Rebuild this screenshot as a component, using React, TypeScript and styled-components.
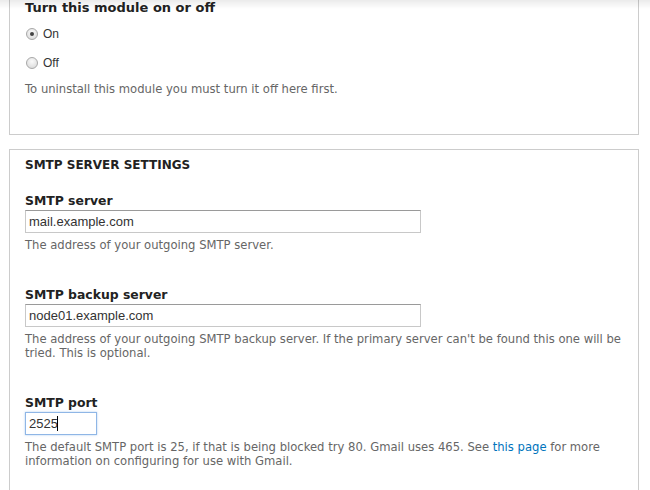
import React from "react";
import styled, { createGlobalStyle } from "styled-components";

const Global = createGlobalStyle`
  html, body { margin: 0; padding: 0; background: #fff; }
  body { font-family: "DejaVu Sans", Verdana, sans-serif; color: #333; }
  * { box-sizing: border-box; }
`;

const Page = styled.div`
  padding: 0 11px 0 9px;
  width: 650px;
  height: 490px;
  overflow: hidden;
`;

const TopShade = styled.div`
  position: fixed;
  top: 0;
  left: 0;
  right: 0;
  height: 9px;
  background: linear-gradient(to bottom, rgba(0,0,0,0.08), rgba(0,0,0,0));
  pointer-events: none;
`;

const Fieldset = styled.div<{ $openTop?: boolean }>`
  border: 1px solid #ccc;
  border-top: ${(p) => (p.$openTop ? "none" : "1px solid #ccc")};
  padding: ${(p) => (p.$openTop ? "0 15px 38px" : "8px 15px 40px")};
  margin-top: ${(p) => (p.$openTop ? "0" : "14px")};
  display: flex;
  flex-direction: column;
`;

const ModuleTitle = styled.div`
  font-size: 13px;
  line-height: 16px;
  font-weight: bold;
  color: #222;
`;

const Legend = styled.div`
  font-size: 12px;
  line-height: 14px;
  font-weight: bold;
  text-transform: uppercase;
  color: #222;
`;

const RadioGroup = styled.div`
  margin-top: 10px;
  display: flex;
  flex-direction: column;
  gap: 13px;
`;

const RadioRow = styled.label`
  display: flex;
  align-items: center;
  height: 16px;
  font-family: "Liberation Sans", Arial, sans-serif;
  font-size: 12px;
  color: #333;
`;

const Radio = styled.input.attrs({ type: "radio" })`
  appearance: none;
  -webkit-appearance: none;
  width: 12px;
  height: 12px;
  margin: 0 5px 0 1px;
  border-radius: 50%;
  border: 1px solid #a8a8a8;
  background: radial-gradient(circle at 50% 35%, #fafafa 0%, #e4e4e4 60%, #d4d4d4 100%);
  position: relative;
  &:checked::after {
    content: "";
    position: absolute;
    left: 3px;
    top: 3px;
    width: 4px;
    height: 4px;
    border-radius: 50%;
    background: #444;
  }
`;

const Description = styled.div<{ $gap?: number }>`
  margin-top: ${(p) => p.$gap ?? 5}px;
  font-size: 11.6px;
  line-height: 14px;
  color: #666;
  a { color: #0074bd; text-decoration: none; }
`;

const FieldList = styled.div`
  margin-top: 21px;
  display: flex;
  flex-direction: column;
  gap: 35px;
`;

const Field = styled.div`
  display: flex;
  flex-direction: column;
  align-items: flex-start;
`;

const Label = styled.label`
  font-size: 12.4px;
  line-height: 16px;
  font-weight: bold;
  color: #222;
`;

const TextInput = styled.input<{ $w: number; $focused?: boolean }>`
  margin-top: 1px;
  width: ${(p) => p.$w}px;
  height: 23px;
  padding: 0 3px;
  font-family: "Liberation Sans", Arial, sans-serif;
  font-size: 13px;
  color: #333;
  border: 1px solid ${(p) => (p.$focused ? "#8fb6e6" : "#c8c8c8")};
  border-top-color: ${(p) => (p.$focused ? "#8fb6e6" : "#9a9a9a")};
  box-shadow: ${(p) => (p.$focused ? "0 0 2px rgba(120,170,230,0.6)" : "none")};
  outline: none;
  background: #fff;
`;

const Caret = styled.span`
  display: inline-block;
  width: 1px;
  height: 15px;
  background: #000;
`;

const PortWrap = styled.div`
  position: relative;
  margin-top: 1px;
`;

const PortCaret = styled.div`
  position: absolute;
  left: 32px;
  top: 4px;
`;

export default function App() {
  return (
    <>
      <Global />
      <TopShade />
      <Page>
        <Fieldset $openTop>
          <ModuleTitle>Turn this module on or off</ModuleTitle>
          <RadioGroup>
            <RadioRow>
              <Radio name="status" defaultChecked />
              On
            </RadioRow>
            <RadioRow>
              <Radio name="status" />
              Off
            </RadioRow>
          </RadioGroup>
          <Description $gap={11}>To uninstall this module you must turn it off here first.</Description>
        </Fieldset>

        <Fieldset>
          <Legend>SMTP server settings</Legend>
          <FieldList>
            <Field>
              <Label>SMTP server</Label>
              <TextInput $w={396} defaultValue="mail.example.com" />
              <Description>The address of your outgoing SMTP server.</Description>
            </Field>
            <Field>
              <Label>SMTP backup server</Label>
              <TextInput $w={396} defaultValue="node01.example.com" />
              <Description>
                The address of your outgoing SMTP backup server. If the primary server can't be found this one will be
                tried. This is optional.
              </Description>
            </Field>
            <Field>
              <Label>SMTP port</Label>
              <PortWrap>
                <TextInput $w={72} $focused defaultValue="2525" style={{ marginTop: 0 }} />
                <PortCaret>
                  <Caret />
                </PortCaret>
              </PortWrap>
              <Description>
                The default SMTP port is 25, if that is being blocked try 80. Gmail uses 465. See <a href="#">this page</a> for more
                information on configuring for use with Gmail.
              </Description>
            </Field>
          </FieldList>
        </Fieldset>
      </Page>
    </>
  );
}
